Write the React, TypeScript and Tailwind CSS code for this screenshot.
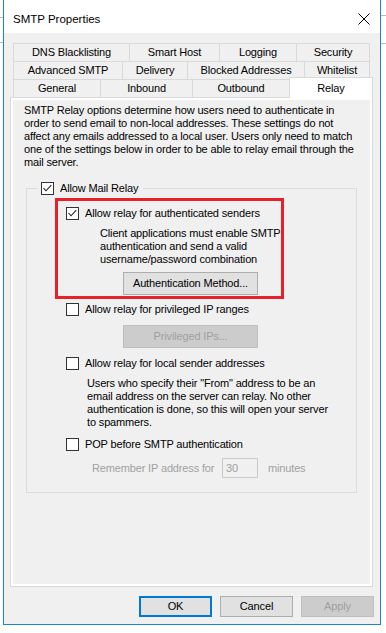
import React from "react";

const Box = ({ checked }: { checked?: boolean }) => (
  <span className="w-[13px] h-[13px] border border-[#333333] bg-white flex items-center justify-center shrink-0">
    {checked && (
      <svg width="11" height="11" viewBox="0 0 11 11">
        <path d="M1.5 5 L4 7.8 L9.3 2.2" fill="none" stroke="#222222" strokeWidth="1.1" />
      </svg>
    )}
  </span>
);

type Tab = { label: string; w: string; last?: boolean };

const TabRow = ({ tabs }: { tabs: Tab[] }) => (
  <div className="flex h-[18px]">
    {tabs.map((t) => (
      <div
        key={t.label}
        className={`${t.w} h-[18px] border-t border-l ${t.last ? "border-r" : ""} border-[#d9d9d9] flex items-center justify-center leading-[13px] whitespace-nowrap`}
      >
        {t.label}
      </div>
    ))}
  </div>
);

export default function App() {
  return (
    <div className="w-[386px] h-[633px] bg-white flex font-['Liberation_Sans',Arial,sans-serif] text-[11px] tracking-[-0.15px] text-black overflow-hidden">
      <div className="w-[3px] shrink-0">
        <div className="h-[17px]" />
        <div className="h-px bg-[#b9b9b9]" />
        <div className="h-[24px]" />
        <div className="h-px bg-[#b9b9b9]" />
      </div>
      <div className="w-[378px] h-[625px] shrink-0 border-x border-b border-[#1883d7] flex flex-col">
        <div className="h-[33px] bg-white flex items-start justify-between pl-[9px] pr-[10px] pt-[12px]">
          <span className="text-[11.5px] leading-[14px] tracking-normal">SMTP Properties</span>
          <svg width="12" height="12" viewBox="0 0 12 12" className="mt-[1px]">
            <path d="M0.5 0.5 L11.5 11.5 M11.5 0.5 L0.5 11.5" stroke="#000000" strokeWidth="1" />
          </svg>
        </div>
        <div className="flex-1 bg-[#f0f0f0] flex flex-col pt-[10px]">
          <div className="ml-[9px] flex flex-col">
            <TabRow
              tabs={[
                { label: "DNS Blacklisting", w: "w-[116px]" },
                { label: "Smart Host", w: "w-[90px]" },
                { label: "Logging", w: "w-[77px]" },
                { label: "Security", w: "w-[74px]", last: true },
              ]}
            />
            <TabRow
              tabs={[
                { label: "Advanced SMTP", w: "w-[109px]" },
                { label: "Delivery", w: "w-[65px]" },
                { label: "Blocked Addresses", w: "w-[117px]" },
                { label: "Whitelist", w: "w-[66px]", last: true },
              ]}
            />
            <div className="flex h-[18px]">
              <div className="w-[87px] h-[18px] border-t border-l border-[#d9d9d9] flex items-center justify-center leading-[13px]">General</div>
              <div className="w-[92px] h-[18px] border-t border-l border-[#d9d9d9] flex items-center justify-center leading-[13px]">Inbound</div>
              <div className="w-[97px] h-[18px] border-t border-l border-[#d9d9d9] flex items-center justify-center leading-[13px]">Outbound</div>
              <div className="relative z-10 w-[84px] h-[21px] -mt-[2px] bg-white border-t border-x border-[#d9d9d9] flex items-center justify-center leading-[13px]">Relay</div>
            </div>
          </div>
          <div className="ml-[6px] w-[363px] h-[490px] border border-[#d9d9d9] bg-white p-[2px] flex flex-col">
            <div className="flex-1 bg-[#f0f0f0] flex flex-col items-start pt-[4px]">
              <p className="ml-[11px] leading-[13px] whitespace-nowrap">
                SMTP Relay options determine how users need to authenticate in
                <br />
                order to send email to non-local addresses. These settings do not
                <br />
                affect any emails addressed to a local user. Users only need to match
                <br />
                one of the settings below in order to be able to relay email through the
                <br />
                mail server.
              </p>
              <fieldset className="mt-[13px] ml-[13px] w-[331px] border border-[#dcdcdc] pb-[14px]">
                <legend className="ml-[11px] px-[3px]">
                  <span className="flex items-center gap-[6px] h-[13px]">
                    <Box checked />
                    <span className="leading-[13px] pr-[2px]">Allow Mail Relay</span>
                  </span>
                </legend>
                <div className="mt-[3px] ml-[28px] w-[229px] border-[3px] border-[#e8202a] pt-[6px] pb-[1px] flex flex-col items-start">
                  <div className="ml-[8px] flex items-center gap-[6px] h-[13px]">
                    <Box checked />
                    <span className="leading-[13px] whitespace-nowrap">Allow relay for authenticated senders</span>
                  </div>
                  <p className="mt-[7px] ml-[42px] leading-[13px] whitespace-nowrap">
                    Client applications must enable SMTP
                    <br />
                    authentication and send a valid
                    <br />
                    username/password combination
                  </p>
                  <div className="mt-[6px] ml-[65px] w-[135px] h-[23px] border border-[#adadad] bg-[#e1e1e1] flex items-center justify-center leading-[13px] whitespace-nowrap">
                    Authentication Method...
                  </div>
                </div>
                <div className="ml-[39px] mt-[4px] flex flex-col items-start">
                  <div className="flex items-center gap-[6px] h-[13px]">
                    <Box />
                    <span className="leading-[13px] whitespace-nowrap">Allow relay for privileged IP ranges</span>
                  </div>
                  <div className="mt-[9px] ml-[57px] w-[135px] h-[23px] border border-[#bfbfbf] bg-[#cccccc] text-[#a0a0a0] flex items-center justify-center leading-[13px]">
                    Privileged IPs...
                  </div>
                  <div className="mt-[9px] flex items-center gap-[6px] h-[13px]">
                    <Box />
                    <span className="leading-[13px] whitespace-nowrap">Allow relay for local sender addresses</span>
                  </div>
                  <p className="mt-[7px] ml-[21px] leading-[13px] whitespace-nowrap">
                    Users who specify their &quot;From&quot; address to be an
                    <br />
                    email address on the server can relay. No other
                    <br />
                    authentication is done, so this will open your server
                    <br />
                    to spammers.
                  </p>
                  <div className="mt-[9px] flex items-center gap-[6px] h-[13px]">
                    <Box />
                    <span className="leading-[13px] whitespace-nowrap">POP before SMTP authentication</span>
                  </div>
                  <div className="mt-[7px] ml-[26px] flex items-center h-[20px] text-[#a0a0a0]">
                    <span className="w-[130px] leading-[13px] whitespace-nowrap">Remember IP address for</span>
                    <div className="w-[36px] h-[20px] border border-[#cccccc] bg-[#f0f0f0] flex items-center pl-[3px] leading-[13px]">30</div>
                    <span className="ml-[10px] leading-[13px]">minutes</span>
                  </div>
                </div>
              </fieldset>
            </div>
          </div>
          <div className="mt-[9px] flex justify-end gap-[8px] pr-[6px]">
            <div className="w-[73px] h-[21px] border-2 border-[#0078d7] bg-[#e1e1e1] flex items-center justify-center leading-[13px]">OK</div>
            <div className="w-[73px] h-[21px] border border-[#adadad] bg-[#e1e1e1] flex items-center justify-center leading-[13px]">Cancel</div>
            <div className="w-[73px] h-[21px] border border-[#bfbfbf] bg-[#cccccc] text-[#a0a0a0] flex items-center justify-center leading-[13px]">Apply</div>
          </div>
        </div>
      </div>
      <div className="flex-1">
        <div className="h-[15px]" />
        <div className="h-px bg-[#b9b9b9]" />
        <div className="h-[27px]" />
        <div className="h-px bg-[#b9b9b9]" />
      </div>
    </div>
  );
}
